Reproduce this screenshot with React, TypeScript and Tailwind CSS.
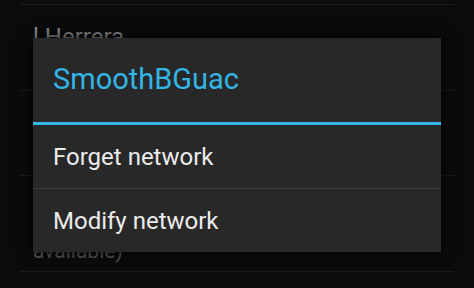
import React from 'react';

const rows = [
  { id: 1, label: 'l Herrera', h: 'h-[86px]', text: 'text-[24px] text-[#8c8c8c] pt-[20px]' },
  { id: 2, label: '', h: 'h-[85px]', text: '' },
  { id: 3, label: 'available)', h: 'h-[96px]', text: 'text-[21px] text-[#5a5a5a] pt-[65px]' },
];

const App: React.FC = () => {
  return (
    <div
      className="relative w-[474px] h-[288px] overflow-hidden bg-[#0a0b0d]"
      style={{ fontFamily: 'Roboto, "Noto Sans", sans-serif' }}
    >
      {/* list behind the dialog */}
      <div className="flex flex-col pt-[4px] px-[20px]">
        {rows.map(row => (
          <div key={row.id} className={`${row.h} border-t border-[#1b1c1f] flex`}>
            <div className={`pl-[13px] leading-none ${row.text}`}>{row.label}</div>
          </div>
        ))}
        <div className="border-t border-[#1b1c1f]" />
      </div>

      {/* context dialog */}
      <div className="absolute left-[33px] top-[38px] w-[408px] bg-[#282828] shadow-[0_0_14px_rgba(0,0,0,0.9)] flex flex-col">
        <div className="h-[84px] flex items-center pl-[20px] text-[29px] text-[#33b5e5]">
          SmoothBGuac
        </div>
        <div className="h-[3px] bg-[#33b5e5]" />
        <button className="h-[63px] flex items-center pl-[20px] text-[24px] text-[#ececec] text-left">
          Forget network
        </button>
        <div className="h-px bg-[#3c3c3c]" />
        <button className="h-[63px] flex items-center pl-[20px] text-[24px] text-[#ececec] text-left">
          Modify network
        </button>
      </div>
    </div>
  );
};

export default App;
